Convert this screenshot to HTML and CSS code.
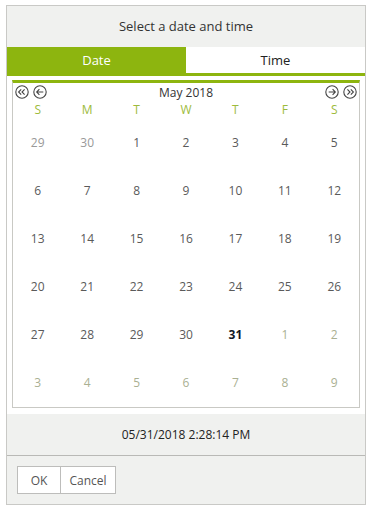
FILE: index.html
```html
<!DOCTYPE html>
<html>
    <head>
        <title>Select a date and time</title>
        <link rel="stylesheet" href="styles.css">
    </head>

    <body>
        <div class="dialog">
            <div class="title">Select a date and time</div>
            <div class="tabs">
                <div class="tab active">Date</div>
                <div class="tab">Time</div>
            </div>
            <div class="content">
                <div class="calendar">
                    <div class="nav">
                        <div class="nav-group">
                            <svg class="icon" viewBox="0 0 14 14"><circle cx="7" cy="7" r="6.2"/><path d="M6.2 4.3 L3.6 7 L6.2 9.7 M9.6 4.3 L7 7 L9.6 9.7"/></svg>
                            <svg class="icon" viewBox="0 0 14 14"><circle cx="7" cy="7" r="6.2"/><path d="M6.4 4.2 L3.7 7 L6.4 9.8 M3.9 7 L10.3 7"/></svg>
                        </div>
                        <div class="month">May 2018</div>
                        <div class="nav-group">
                            <svg class="icon" viewBox="0 0 14 14"><circle cx="7" cy="7" r="6.2"/><path d="M7.6 4.2 L10.3 7 L7.6 9.8 M3.7 7 L10.1 7"/></svg>
                            <svg class="icon" viewBox="0 0 14 14"><circle cx="7" cy="7" r="6.2"/><path d="M4.4 4.3 L7 7 L4.4 9.7 M7.8 4.3 L10.4 7 L7.8 9.7"/></svg>
                        </div>
                    </div>
                    <div class="grid">
                        <span class="dow">S</span><span class="dow">M</span><span class="dow">T</span><span class="dow">W</span><span class="dow">T</span><span class="dow">F</span><span class="dow">S</span>

                        <span class="day prev">29</span><span class="day prev">30</span><span class="day">1</span><span class="day">2</span><span class="day">3</span><span class="day">4</span><span class="day">5</span>
                        <span class="day">6</span><span class="day">7</span><span class="day">8</span><span class="day">9</span><span class="day">10</span><span class="day">11</span><span class="day">12</span>
                        <span class="day">13</span><span class="day">14</span><span class="day">15</span><span class="day">16</span><span class="day">17</span><span class="day">18</span><span class="day">19</span>
                        <span class="day">20</span><span class="day">21</span><span class="day">22</span><span class="day">23</span><span class="day">24</span><span class="day">25</span><span class="day">26</span>
                        <span class="day">27</span><span class="day">28</span><span class="day">29</span><span class="day">30</span><span class="day selected">31</span><span class="day next">1</span><span class="day next">2</span>
                        <span class="day next">3</span><span class="day next">4</span><span class="day next">5</span><span class="day next">6</span><span class="day next">7</span><span class="day next">8</span><span class="day next">9</span>
                    </div>
                </div>
            </div>
            <div class="value">05/31/2018 2:28:14 PM</div>
            <div class="footer">
                <button class="btn ok">OK</button><button class="btn cancel">Cancel</button>
            </div>
        </div>
    </body>
</html>
```

FILE: styles.css
```css
body{margin: 0;font-family: "Open Sans", "Noto Sans", sans-serif;font-size: 12px;color: #333;background: #fff;}
.dialog{box-sizing: border-box;width: 360px;height: 500px;margin: 5px 0 0 6px;border: 1px solid #c9c9c6;background: #f0f1ef;}
.title{height: 41px;line-height: 41px;text-align: center;font-size: 13px;color: #333;}
.tabs{display: flex;height: 26px;border-bottom: 3px solid #8db50f;}
.tab{flex: 1;line-height: 26px;text-align: center;font-size: 13px;background: #fff;color: #222;}
.tab.active{background: #8db50f;color: #fff;}
.content{background: #fff;padding: 4px 5px 6px 5px;}
.calendar{border: 1px solid #c9c9c4;border-top: 3px solid #8db50f;}
.nav{display: flex;align-items: center;justify-content: space-between;height: 18px;padding: 0 2px;}
.nav-group{display: flex;gap: 4px;}
.icon{width: 14px;height: 14px;fill: none;stroke: #444;stroke-width: 1.1;}
.month{font-size: 12px;color: #333;}
.grid{display: grid;grid-template-columns: repeat(7, 1fr);grid-auto-rows: 48px;grid-template-rows: 17px;padding-bottom: 1px;}
.grid span{display: flex;align-items: center;justify-content: center;}
.dow{color: #9dbb3c;font-size: 12px;}
.day{color: #5a5a5a;}
.day.prev{color: #999;}
.day.next{color: #aab092;}
.day.selected{color: #111827;font-weight: bold;}
.value{height: 41px;line-height: 41px;text-align: center;font-size: 12px;color: #222;border-bottom: 1px solid #b9b9b6;}
.footer{padding: 10px 0 0 10px;}
.btn{height: 28px;padding: 0;margin: 0;border: 1px solid #bdbdbb;background: #fff;font-family: "Open Sans", "Noto Sans", sans-serif;font-size: 12px;color: #555;}
.btn + .btn{border-left: none;}
.btn.ok{width: 44px;}
.btn.cancel{width: 55px;}
```
